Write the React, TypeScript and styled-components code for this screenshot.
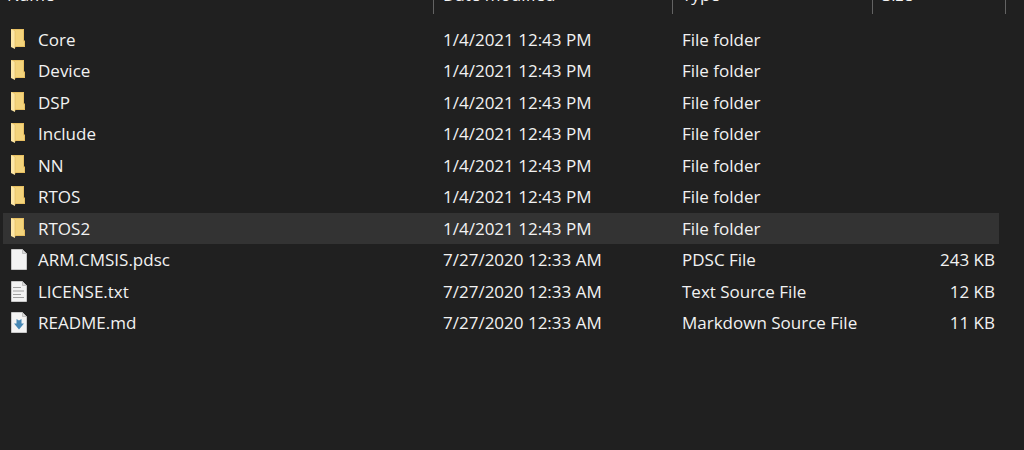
import React from "react";
import styled, { createGlobalStyle } from "styled-components";

const GlobalStyle = createGlobalStyle`
  body {
    margin: 0;
    background: #202020;
    color: #f2f2f2;
    font-family: "Open Sans", "Noto Sans", sans-serif;
    font-size: 17px;
    line-height: 24px;
  }
`;

const Pane = styled.main`
  min-height: 100vh;
  box-sizing: border-box;
  overflow: hidden;
  padding: 0 18px 0 3px;
`;

const FileTable = styled.table`
  width: 100%;
  margin-top: -24px;
  table-layout: fixed;
  border-collapse: separate;
  border-spacing: 0;
`;

const Column = styled.col<{ $width?: number }>`
  width: ${(p) => (p.$width ? `${p.$width}px` : "auto")};
`;

const HeaderCell = styled.th`
  height: 38px;
  padding: 0;
  border-right: 1px solid #636363;
  text-align: left;
  font-weight: 400;
`;

const SortButton = styled.button<{ $first?: boolean }>`
  display: block;
  width: 100%;
  padding: 0 0 0 ${(p) => (p.$first ? 4 : 9)}px;
  border: 0;
  background: none;
  color: inherit;
  font: inherit;
  text-align: left;
`;

const Rows = styled.tbody`
  &::before {
    content: "";
    display: table-row;
    height: 10px;
  }
`;

const Row = styled.tr<{ $selected?: boolean }>`
  height: 31px;

  &:nth-child(even) {
    height: 32px;
  }

  td {
    background: ${(p) => (p.$selected ? "#333333" : "transparent")};
  }
`;

const Cell = styled.td<{ $align?: "right" }>`
  padding: 0 0 0 9px;
  white-space: nowrap;
  text-align: ${(p) => p.$align ?? "left"};

  &:last-child {
    padding-right: 4px;
    border-right: 7px solid transparent;
    background-clip: padding-box;
  }
`;

const NameCell = styled(Cell)`
  padding-left: 7px;
`;

const FileName = styled.span`
  display: flex;
  align-items: center;
  gap: 10px;
`;

const Icon = styled.svg`
  flex: none;
  width: 18px;
  height: 24px;
`;

type Kind = "folder" | "blank" | "text" | "markdown";

function FileIcon({ kind }: { kind: Kind }) {
  if (kind === "folder") {
    return (
      <Icon viewBox="0 0 18 24" aria-hidden="true">
        <path d="M1 1h13v11l1 1v6H4z" fill="#e8c062" />
        <path d="M5 2h8v11l1 1v4H5z" fill="#f4d47c" />
        <path d="M1 1l4 2v18l-4-2z" fill="#fde7a6" />
        <path d="M5 3v17" stroke="#e0b860" strokeWidth="0.6" />
      </Icon>
    );
  }
  return (
    <Icon viewBox="0 0 18 24" aria-hidden="true">
      <path d="M1.5 1.5h11l4 4v16h-15z" fill="#f3f3f3" stroke="#d8d8d8" strokeWidth="0.8" />
      <path d="M12.5 1.5v4h4z" fill="#dadada" stroke="#b0b0b0" strokeWidth="0.7" />
      {kind === "text" && (
        <path d="M3 7.5h8M3 11h11M3 14.5h8M3 17.5h11" stroke="#a0a0a0" strokeWidth="1" />
      )}
      {kind === "markdown" && (
        <path d="M6.5 8l2.5 1.5L11.500 8v4.500H14L9 18.500 4 12.500h2.500z" fill="#4788b5" />
      )}
    </Icon>
  );
}

interface Entry {
  name: string;
  kind: Kind;
  modified: string;
  type: string;
  size?: string;
  selected?: boolean;
}

const folder = (name: string, selected = false): Entry => ({
  name,
  kind: "folder",
  modified: "1/4/2021 12:43 PM",
  type: "File folder",
  selected,
});

const file = (name: string, kind: Kind, type: string, size: string): Entry => ({
  name,
  kind,
  modified: "7/27/2020 12:33 AM",
  type,
  size,
});

const entries: Entry[] = [
  folder("Core"),
  folder("Device"),
  folder("DSP"),
  folder("Include"),
  folder("NN"),
  folder("RTOS"),
  folder("RTOS2", true),
  file("ARM.CMSIS.pdsc", "blank", "PDSC File", "243 KB"),
  file("LICENSE.txt", "text", "Text Source File", "12 KB"),
  file("README.md", "markdown", "Markdown Source File", "11 KB"),
];

export default function App() {
  return (
    <>
      <GlobalStyle />
      <Pane>
        <FileTable>
          <colgroup>
            <Column />
            <Column $width={239} />
            <Column $width={200} />
            <Column $width={133} />
          </colgroup>
          <thead>
            <tr>
              {["Name", "Date modified", "Type", "Size"].map((label, i) => (
                <HeaderCell key={label} scope="col">
                  <SortButton type="button" $first={i === 0}>{label}</SortButton>
                </HeaderCell>
              ))}
            </tr>
          </thead>
          <Rows>
            {entries.map((entry) => (
              <Row key={entry.name} $selected={entry.selected}>
                <NameCell>
                  <FileName>
                    <FileIcon kind={entry.kind} />
                    {entry.name}
                  </FileName>
                </NameCell>
                <Cell>{entry.modified}</Cell>
                <Cell>{entry.type}</Cell>
                <Cell $align="right">{entry.size}</Cell>
              </Row>
            ))}
          </Rows>
        </FileTable>
      </Pane>
    </>
  );
}
